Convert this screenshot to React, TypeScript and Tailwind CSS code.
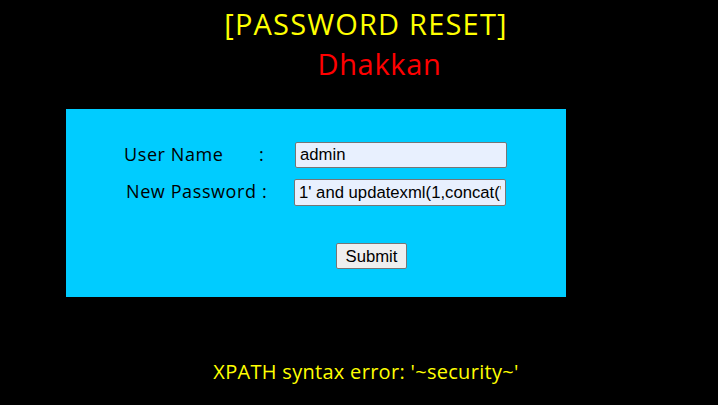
export default function App() {
  return (
    <div className="w-full h-[405px] bg-black overflow-hidden font-['Open_Sans',sans-serif]">
      {/* heading */}
      <div className="pt-[4px] pl-[14px] text-center text-[29px] leading-[40px] tracking-[1.2px] text-[#ffff00]">
        [PASSWORD RESET]
      </div>
      <div className="pl-[41px] text-center text-[29px] leading-[40px] tracking-[0.7px] text-[#ff0000]">
        Dhakkan
      </div>

      {/* form */}
      <form
        className="ml-[66px] mt-[25px] w-[500px] h-[188px] bg-[#00ccff]"
        onSubmit={(e) => e.preventDefault()}
      >
        <div className="flex items-center pt-[33px]">
          <div className="w-[229px] pl-[58px] pb-[3px] text-[18px] leading-[20px] tracking-[0.6px] text-black flex">
            <span className="w-[135px]">User Name</span>
            <span>:</span>
          </div>
          <input
            type="text"
            defaultValue="admin"
            className="w-[212px] h-[26px] px-[4px] bg-[#e8f0fe] border border-[#767676] rounded-[2px] text-[16.7px] text-black font-['Liberation_Sans',sans-serif] outline-none"
          />
        </div>
        <div className="flex items-center mt-[11px]">
          <div className="w-[228px] pl-[60px] pb-[3px] text-[18px] leading-[20px] tracking-[0.6px] text-black">
            New Password :
          </div>
          <input
            type="text"
            defaultValue="1' and updatexml(1,concat('~',(select database())),1)#"
            className="w-[212px] h-[27px] px-[4px] bg-[#e8f0fe] border border-[#767676] rounded-[2px] text-[16.7px] text-black font-['Liberation_Sans',sans-serif] outline-none"
          />
        </div>
        <div className="pl-[270px] mt-[37px]">
          <button
            type="submit"
            className="w-[71px] h-[26px] bg-[#efefef] border border-[#767676] rounded-[2px] text-[16.7px] text-black font-['Liberation_Sans',sans-serif]"
          >
            Submit
          </button>
        </div>
      </form>

      {/* error */}
      <div className="mt-[61px] pl-[14px] text-center text-[20px] leading-[28px] tracking-[0.3px] text-[#ffff00]">
        XPATH syntax error: '~security~'
      </div>
    </div>
  );
}
